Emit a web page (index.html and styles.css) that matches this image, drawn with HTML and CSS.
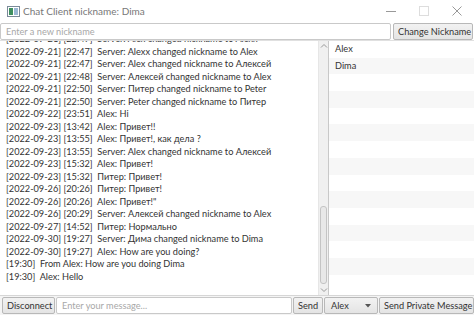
FILE: index.html
```html
<!DOCTYPE html>
<html lang="en">
<head>
  <meta charset="UTF-8">
  <title>Chat Client nickname: Dima</title>
  <link rel="stylesheet" href="styles.css">
</head>
<body>
  <div class="window">
    <div class="titlebar">
      <svg class="app-icon" width="13" height="11" viewBox="0 0 13 11">
        <rect x="0.5" y="0.5" width="12" height="10" fill="#fff" stroke="#7a8a99"/>
        <rect x="2" y="2" width="4" height="7" fill="#3f8f5f"/>
        <rect x="7" y="2" width="4" height="7" fill="#9bb8d4"/>
      </svg>
      <span class="title">Chat Client nickname: Dima</span>
      <div class="controls">
        <svg width="10" height="10" viewBox="0 0 10 10"><line x1="0" y1="5.5" x2="10" y2="5.5" stroke="#999" stroke-width="1"/></svg>
        <svg width="10" height="10" viewBox="0 0 10 10"><rect x="0.5" y="0.5" width="9" height="9" fill="none" stroke="#ddd"/></svg>
        <svg width="10" height="10" viewBox="0 0 10 10"><path d="M0.5 0.5 L9.5 9.5 M9.5 0.5 L0.5 9.5" stroke="#999" stroke-width="1"/></svg>
      </div>
    </div>

    <div class="nick-row">
      <input class="field nick-field" type="text" placeholder="Enter a new nickname">
      <button class="btn">Change Nickname</button>
    </div>

    <div class="main">
      <div class="chat">
        <div class="lines">
          <div>[2022-09-21] [22:47]&nbsp; Server: Alex changed nickname to Alexx</div>
          <div>[2022-09-21] [22:47]&nbsp; Server: Alexx changed nickname to Alex</div>
          <div>[2022-09-21] [22:47]&nbsp; Server: Alex changed nickname to Алексей</div>
          <div>[2022-09-21] [22:48]&nbsp; Server: Алексей changed nickname to Alex</div>
          <div>[2022-09-21] [22:50]&nbsp; Server: Питер changed nickname to Peter</div>
          <div>[2022-09-21] [22:50]&nbsp; Server: Peter changed nickname to Питер</div>
          <div>[2022-09-22] [23:51]&nbsp; Alex: Hi</div>
          <div>[2022-09-23] [13:42]&nbsp; Alex: Привет!!</div>
          <div>[2022-09-23] [13:55]&nbsp; Alex: Привет!, как дела ?</div>
          <div>[2022-09-23] [13:55]&nbsp; Server: Alex changed nickname to Алексей</div>
          <div>[2022-09-23] [15:32]&nbsp; Alex: Привет!</div>
          <div>[2022-09-23] [15:32]&nbsp; Питер: Привет!</div>
          <div>[2022-09-26] [20:26]&nbsp; Питер: Привет!</div>
          <div>[2022-09-26] [20:26]&nbsp; Alex: Привет!"</div>
          <div>[2022-09-26] [20:29]&nbsp; Server: Алексей changed nickname to Alex</div>
          <div>[2022-09-27] [14:52]&nbsp; Питер: Нормально</div>
          <div>[2022-09-30] [19:27]&nbsp; Server: Дима changed nickname to Dima</div>
          <div>[2022-09-30] [19:27]&nbsp; Alex: How are you doing?</div>
          <div>[19:30]&nbsp; From Alex: How are you doing Dima</div>
          <div>[19:30]&nbsp; Alex: Hello</div>
        </div>
      </div>
      <div class="scrollbar">
        <svg class="arrow" width="8" height="6" viewBox="0 0 8 6"><path d="M1 4.5 L4 1.5 L7 4.5" fill="none" stroke="#999"/></svg>
        <div class="track"><div class="thumb"></div></div>
        <svg class="arrow" width="8" height="6" viewBox="0 0 8 6"><path d="M1 1.5 L4 4.5 L7 1.5" fill="none" stroke="#999"/></svg>
      </div>
      <div class="users">
        <div class="user">Alex</div>
        <div class="user">Dima</div>
        <div class="user"></div>
        <div class="user"></div>
        <div class="user"></div>
        <div class="user"></div>
        <div class="user"></div>
        <div class="user"></div>
        <div class="user"></div>
        <div class="user"></div>
        <div class="user"></div>
        <div class="user"></div>
        <div class="user"></div>
        <div class="user"></div>
        <div class="user"></div>
      </div>
    </div>

    <div class="bottom">
      <button class="btn disconnect">Disconnect</button>
      <input class="field msg-field" type="text" placeholder="Enter your message...">
      <button class="btn send">Send</button>
      <div class="combo">
        <span>Alex</span>
        <svg width="6" height="4" viewBox="0 0 6 4"><path d="M0 0 L6 0 L3 3.5 Z" fill="#555"/></svg>
      </div>
      <button class="btn private">Send Private Message</button>
    </div>
  </div>
</body>
</html>
```

FILE: styles.css
```css
body {
  margin: 0;
  font-family: Lato, "Open Sans", sans-serif;
  font-size: 9.2px;
  color: #333;
  background: #fff;
}
.window {
  width: 474px;
  height: 315px;
  display: flex;
  flex-direction: column;
  overflow: hidden;
}
.titlebar {
  height: 22px;
  flex: none;
  display: flex;
  align-items: center;
  padding-left: 7px;
}
.app-icon {
  margin-right: 3px;
}
.title {
  font-size: 10px;
  color: #777;
}
.controls {
  margin-left: auto;
  display: flex;
  gap: 23px;
  padding-right: 12px;
}
.nick-row {
  height: 18px;
  flex: none;
  display: flex;
  gap: 2px;
}
.field {
  font: inherit;
  color: #333;
  border: 1px solid #c9c9c9;
  border-radius: 2px;
  padding: 0 5px;
  margin: 0;
  height: 17px;
  box-sizing: border-box;
  background: #fff;
  outline: none;
}
.field::placeholder {
  color: #a8a8a8;
}
.nick-field {
  flex: 1;
  margin-top: 1px;
}
.btn {
  font: inherit;
  color: #333;
  background: linear-gradient(#f2f2f2, #e4e4e4);
  border: 1px solid #b8b8b8;
  border-radius: 2px;
  padding: 0 4px;
  margin: 0;
  height: 17px;
  white-space: nowrap;
}
.nick-row .btn {
  width: 80px;
  margin-top: 1px;
  margin-right: 1px;
}
.main {
  flex: 1;
  display: flex;
  min-height: 0;
  border-top: 1px solid #e0e0e0;
}
.chat {
  flex: 1;
  overflow: hidden;
}
.lines {
  margin-top: -8px;
  padding-left: 6px;
  line-height: 12.5px;
  white-space: nowrap;
}
.scrollbar {
  width: 9px;
  flex: none;
  display: flex;
  flex-direction: column;
  align-items: center;
  background: #f0f0f0;
  border-left: 1px solid #e6e6e6;
  border-right: 1px solid #c8c8c8;
}
.arrow {
  flex: none;
  margin: 2px 0;
}
.track {
  flex: 1;
  width: 100%;
  display: flex;
  flex-direction: column;
  justify-content: flex-end;
}
.thumb {
  height: 76px;
  margin: 0 1px 1px;
  background: #e8e8e8;
  border: 1px solid #c4c4c4;
  border-radius: 3px;
}
.users {
  width: 145px;
  flex: none;
  overflow: hidden;
}
.user {
  height: 16.7px;
  line-height: 16.7px;
  padding-left: 6px;
}
.user:nth-child(even) {
  background: #f7f7f7;
}
.bottom {
  height: 19px;
  flex: none;
  display: flex;
  align-items: center;
  gap: 1px;
  padding: 0 0 0 2px;
  border-top: 1px solid #d6d6d6;
  background: #f4f4f4;
}
.disconnect {
  width: 53px;
}
.msg-field {
  flex: 1;
}
.send {
  width: 30px;
}
.combo {
  width: 54px;
  height: 17px;
  box-sizing: border-box;
  display: flex;
  align-items: center;
  justify-content: space-between;
  padding: 0 6px;
  background: linear-gradient(#f2f2f2, #e4e4e4);
  border: 1px solid #b8b8b8;
  border-radius: 2px;
}
.private {
  width: 95px;
}
```
